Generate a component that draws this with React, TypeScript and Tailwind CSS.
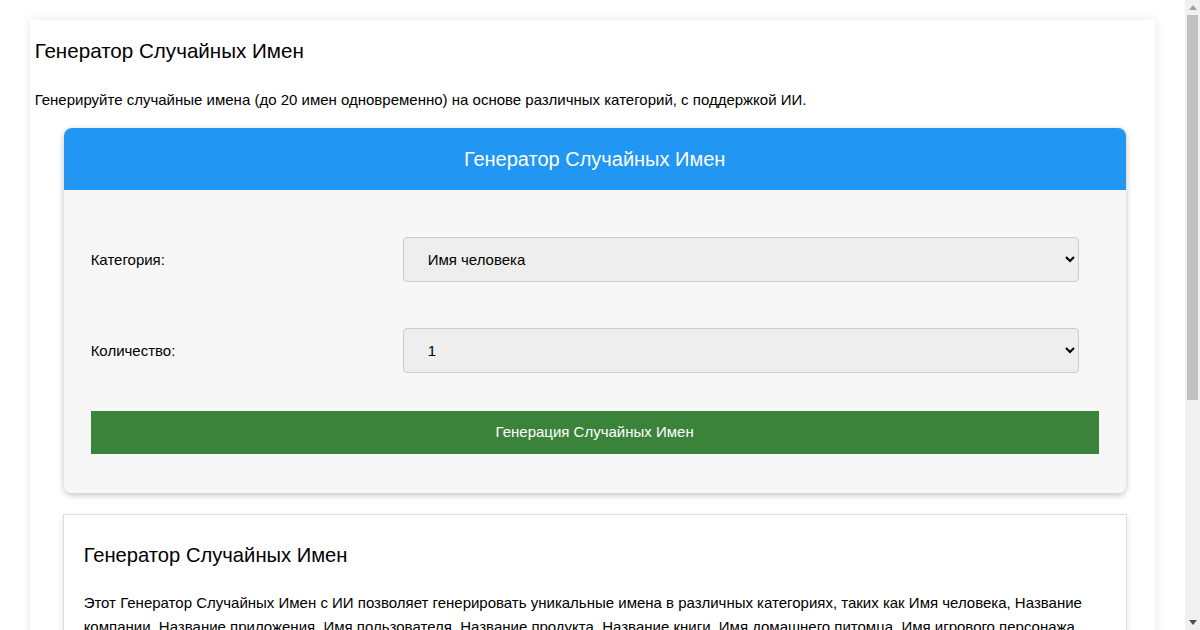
import React from "react";

const font = { fontFamily: '"Liberation Sans", Arial, sans-serif' };

function Row({ label, value, options }: { label: string; value: string; options: string[] }) {
  return (
    <div className="flex items-center h-[45px]">
      <label className="w-[312px] text-[15px] text-black pt-[2px]">{label}</label>
      <select
        defaultValue={value}
        className="w-[676px] h-[45px] pl-5 pr-2 bg-[#eeeeee] border border-[#cccccc] rounded-[4px] text-[15px] text-black"
        style={font}
      >
        {options.map((o) => (
          <option key={o}>{o}</option>
        ))}
      </select>
    </div>
  );
}

function Scrollbar() {
  return (
    <div className="w-[15px] h-full bg-[#f1f1f1] flex flex-col items-center">
      <div className="h-[15px] flex items-center justify-center">
        <svg width="8" height="5" viewBox="0 0 8 5">
          <polygon points="4,0 8,5 0,5" fill="#a3a3a3" />
        </svg>
      </div>
      <div className="w-[11px] h-[385px] bg-[#c1c1c1]" />
      <div className="flex-1" />
      <div className="h-[15px] flex items-center justify-center">
        <svg width="8" height="5" viewBox="0 0 8 5">
          <polygon points="0,0 8,0 4,5" fill="#505050" />
        </svg>
      </div>
    </div>
  );
}

export default function App() {
  return (
    <div className="flex h-[630px] overflow-hidden bg-white" style={font}>
      <div className="flex-1 pt-5">
        <div className="w-[95%] mx-auto bg-white shadow-[0_0_10px_rgba(0,0,0,0.1)] px-[5px] pb-10">
          <h1 className="text-[20.6px] text-black pt-[19px] leading-[24px]">Генератор Случайных Имен</h1>
          <p className="text-[15px] text-black mt-[28px] leading-[18px]">
            Генерируйте случайные имена (до 20 имен одновременно) на основе различных категорий, с поддержкой ИИ.
          </p>

          <div className="ml-[29px] w-[1062px] mt-[19px] rounded-lg overflow-hidden shadow-[0_2px_6px_rgba(0,0,0,0.25)]">
            <div className="h-[62px] bg-[#2196f3] flex items-center justify-center text-white text-[20px]">
              Генератор Случайных Имен
            </div>
            <div className="bg-[#f7f7f7] px-[27px] pt-[47px] pb-[39px]">
              <Row
                label="Категория:"
                value="Имя человека"
                options={["Имя человека", "Название компании", "Название приложения", "Имя пользователя"]}
              />
              <div className="mt-[46px]">
                <Row label="Количество:" value="1" options={["1", "5", "10", "20"]} />
              </div>
              <button className="mt-[38px] w-full h-[43px] bg-[#3b833a] text-white text-[15px]">
                Генерация Случайных Имен
              </button>
            </div>
          </div>

          <div className="ml-[28px] w-[1064px] mt-[21px] bg-white border border-[#dddddd] shadow-[0_2px_6px_rgba(0,0,0,0.12)] px-5 pt-[28px] pb-6">
            <h2 className="text-[20.2px] text-black leading-[24px]">Генератор Случайных Имен</h2>
            <p className="text-[15px] text-black leading-[24px] mt-[24px]">
              Этот Генератор Случайных Имен с ИИ позволяет генерировать уникальные имена в различных категориях, таких как Имя человека, Название компании, Название приложения, Имя пользователя, Название продукта, Название книги, Имя домашнего питомца, Имя игрового персонажа, Название города и многое другое. Просто выберите категорию и количество имен, а затем нажмите кнопку генерации.
            </p>
          </div>
        </div>
      </div>
      <Scrollbar />
    </div>
  );
}
